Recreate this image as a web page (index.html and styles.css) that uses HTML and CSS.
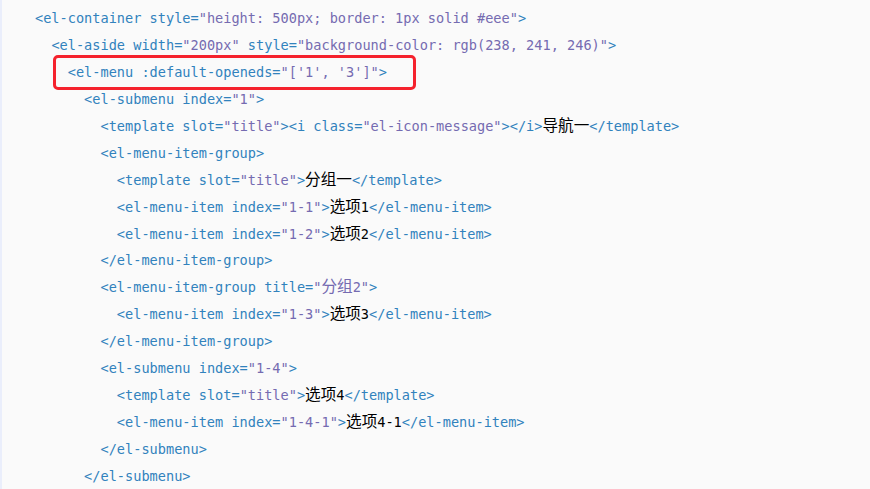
FILE: index.html
```html
<!DOCTYPE html>
<html lang="zh">
<head>
<meta charset="utf-8">
<link rel="stylesheet" href="styles.css">
</head>
<body>
<div class="code-box">
<pre class="code"><span class="t">&lt;el-container</span> <span class="t">style=</span><span class="s">"height: 500px; border: 1px solid #eee"</span><span class="t">&gt;</span>
  <span class="t">&lt;el-aside</span> <span class="t">width=</span><span class="s">"200px"</span> <span class="t">style=</span><span class="s">"background-color: rgb(238, 241, 246)"</span><span class="t">&gt;</span>
    <span class="t">&lt;el-menu</span> <span class="t">:default-openeds=</span><span class="s">"['1', '3']"</span><span class="t">&gt;</span>
      <span class="t">&lt;el-submenu</span> <span class="t">index=</span><span class="s">"1"</span><span class="t">&gt;</span>
        <span class="t">&lt;template</span> <span class="t">slot=</span><span class="s">"title"</span><span class="t">&gt;&lt;i</span> <span class="t">class=</span><span class="s">"el-icon-message"</span><span class="t">&gt;&lt;/i&gt;</span><span class="zh">导航一</span><span class="t">&lt;/template&gt;</span>
        <span class="t">&lt;el-menu-item-group&gt;</span>
          <span class="t">&lt;template</span> <span class="t">slot=</span><span class="s">"title"</span><span class="t">&gt;</span><span class="zh">分组一</span><span class="t">&lt;/template&gt;</span>
          <span class="t">&lt;el-menu-item</span> <span class="t">index=</span><span class="s">"1-1"</span><span class="t">&gt;</span><span class="zh">选项</span>1<span class="t">&lt;/el-menu-item&gt;</span>
          <span class="t">&lt;el-menu-item</span> <span class="t">index=</span><span class="s">"1-2"</span><span class="t">&gt;</span><span class="zh">选项</span>2<span class="t">&lt;/el-menu-item&gt;</span>
        <span class="t">&lt;/el-menu-item-group&gt;</span>
        <span class="t">&lt;el-menu-item-group</span> <span class="t">title=</span><span class="s">"<span class="zh">分组</span>2"</span><span class="t">&gt;</span>
          <span class="t">&lt;el-menu-item</span> <span class="t">index=</span><span class="s">"1-3"</span><span class="t">&gt;</span><span class="zh">选项</span>3<span class="t">&lt;/el-menu-item&gt;</span>
        <span class="t">&lt;/el-menu-item-group&gt;</span>
        <span class="t">&lt;el-submenu</span> <span class="t">index=</span><span class="s">"1-4"</span><span class="t">&gt;</span>
          <span class="t">&lt;template</span> <span class="t">slot=</span><span class="s">"title"</span><span class="t">&gt;</span><span class="zh">选项</span>4<span class="t">&lt;/template&gt;</span>
          <span class="t">&lt;el-menu-item</span> <span class="t">index=</span><span class="s">"1-4-1"</span><span class="t">&gt;</span><span class="zh">选项</span>4-1<span class="t">&lt;/el-menu-item&gt;</span>
        <span class="t">&lt;/el-submenu&gt;</span>
      <span class="t">&lt;/el-submenu&gt;</span></pre>
<div class="highlight-box"></div>
</div>
</body>
</html>
```

FILE: styles.css
```css
html, body {
  margin: 0;
  padding: 0;
  background: #fafafa;
  overflow: hidden;
}
.code-box {
  position: relative;
  width: 870px;
  height: 489px;
  box-sizing: border-box;
  border-left: 2px solid #eaeefb;
  background: #fafafa;
}
.code {
  margin: 0;
  padding: 5px 0 0 33px;
  font-family: "DejaVu Sans Mono", "Liberation Mono", monospace;
  font-size: 13.6px;
  line-height: 26.94px;
  color: #000;
  white-space: pre;
}
.t { color: #3182bd; }
.s { color: #756bb1; }
.zh {
  font-family: "Noto Sans CJK SC", sans-serif;
  font-size: 15.6px;
  line-height: 1;
  color: #000;
}
.s .zh { color: #756bb1; }
.highlight-box {
  position: absolute;
  left: 51px;
  top: 55px;
  width: 363px;
  height: 35px;
  box-sizing: border-box;
  border: 3px solid #f5222d;
  border-radius: 5px;
}
```
